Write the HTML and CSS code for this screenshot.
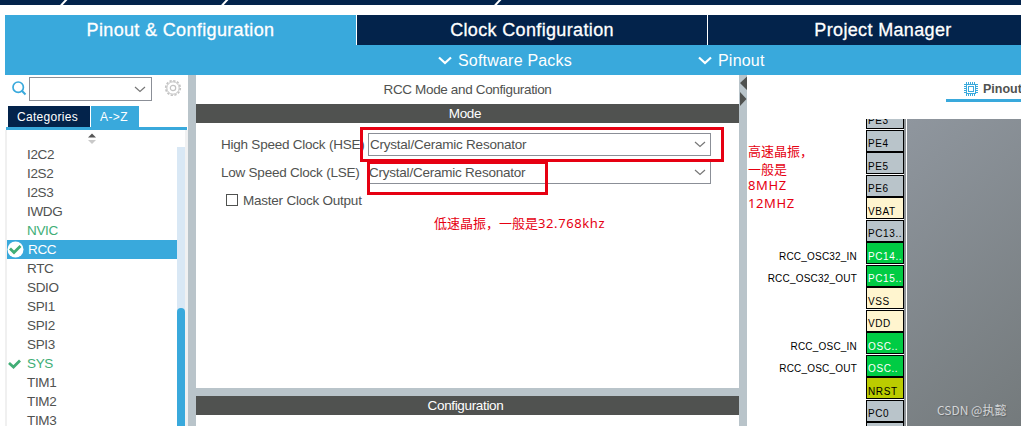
FILE: index.html
```html
<!DOCTYPE html>
<html lang="en">
<head>
    <meta charset="UTF-8">
    <meta name="viewport" content="width=device-width, initial-scale=1.0">
    <title>Pinout &amp; Configuration</title>
    <link rel="stylesheet" href="styles.css">
</head>
<body>
    <div class="breadcrumb">
        <svg width="1021" height="5" viewBox="0 0 1021 5" stroke="#fff" stroke-width="2">
            <path d="M61 5.5L67 -1M222 5.5L228 -1M495 5.5L501 -1"/>
        </svg>
    </div>

    <header class="header">
        <nav class="main-tabs">
            <div class="main-tab active"><span>Pinout &amp; Configuration</span></div>
            <div class="main-tab"><span>Clock Configuration</span></div>
            <div class="main-tab"><span>Project Manager</span></div>
        </nav>
        <div class="sub-menu">
            <div class="sub-item packs">
                <svg width="14" height="9" viewBox="0 0 14 9" fill="none" stroke="#fff" stroke-width="2.2"><path d="M1 1.5L7 7L13 1.5"/></svg>
                <span>Software Packs</span>
            </div>
            <div class="sub-item pinout">
                <svg width="14" height="9" viewBox="0 0 14 9" fill="none" stroke="#fff" stroke-width="2.2"><path d="M1 1.5L7 7L13 1.5"/></svg>
                <span>Pinout</span>
            </div>
        </div>
    </header>

    <main class="workspace">
        <aside class="sidebar">
            <div class="search-row">
                <svg class="search-icon" width="15" height="15" viewBox="0 0 15 15" fill="none" stroke="#39a9dc"><circle cx="6.2" cy="6.2" r="5.2" stroke-width="1.7"/><path d="M9.8 9.8L13.5 13.5" stroke-width="2"/></svg>
                <div class="search-box">
                    <svg class="arrow" width="12" height="7" viewBox="0 0 12 7"><path d="M1 1L6 5.5L11 1"/></svg>
                </div>
                <svg class="gear" width="18" height="18" viewBox="0 0 18 18" fill="none" stroke="#c3c3c3">
                    <circle cx="9" cy="9" r="7.3" stroke-width="1.6" stroke-dasharray="2.3 1.522"/>
                    <circle cx="9" cy="9" r="6.2"/>
                    <circle cx="9" cy="9" r="2.7" stroke-width="1.2"/>
                </svg>
            </div>
            <div class="side-tabs">
                <span class="side-tab categories">Categories</span>
                <span class="side-tab az">A-&gt;Z</span>
            </div>
            <div class="list">
                <div class="rows">
                    <svg class="sorter" width="8" height="12" viewBox="0 0 8 12"><path d="M0 4.5L4 0.5L8 4.5Z" fill="#555"/><path d="M0 7L4 11L8 7Z" fill="#c9c9c9"/></svg>
                    <div class="row">I2C2</div>
                    <div class="row">I2S2</div>
                    <div class="row">I2S3</div>
                    <div class="row">IWDG</div>
                    <div class="row green">NVIC</div>
                    <div class="row selected">
                        <svg class="check" width="17" height="17" viewBox="0 0 17 17"><circle cx="8.5" cy="8.5" r="8" fill="#fff"/><path d="M3 7.500L7 11.500L13.500 5" fill="none" stroke="#41ae76" stroke-width="2.8"/></svg>
                        RCC
                    </div>
                    <div class="row">RTC</div>
                    <div class="row">SDIO</div>
                    <div class="row">SPI1</div>
                    <div class="row">SPI2</div>
                    <div class="row">SPI3</div>
                    <div class="row green">
                        <svg class="check" width="15" height="17" viewBox="0 0 15 17"><path d="M2 8L6.500 12L13 5.500" fill="none" stroke="#41ae76" stroke-width="2.8"/></svg>
                        SYS
                    </div>
                    <div class="row">TIM1</div>
                    <div class="row">TIM2</div>
                    <div class="row">TIM3</div>
                </div>
                <div class="scrollbar"><div class="thumb"></div></div>
            </div>
        </aside>

        <div class="splitter"></div>

        <section class="mode-panel">
            <div class="panel-title"><span>RCC Mode and Configuration</span></div>
            <div class="bar"><span>Mode</span></div>
            <div class="form">
                <div class="field">
                    <label>High Speed Clock (HSE)</label>
                    <div class="select"><span>Crystal/Ceramic Resonator</span><svg class="arrow" width="12" height="7" viewBox="0 0 12 7"><path d="M1 1L6 5.5L11 1"/></svg></div>
                </div>
                <div class="field">
                    <label>Low Speed Clock (LSE)</label>
                    <div class="select lse"><span>Crystal/Ceramic Resonator</span><svg class="arrow" width="12" height="7" viewBox="0 0 12 7"><path d="M1 1L6 5.5L11 1"/></svg></div>
                </div>
                <div class="option"><i class="box"></i><span>Master Clock Output</span></div>
            </div>
            <div class="h-splitter"></div>
            <div class="bar config"><span>Configuration</span></div>
        </section>

        <div class="splitter">
            <svg width="8" height="32" viewBox="0 0 8 32" fill="#505250"><path d="M8 1.500V15L1 8ZM1 17V31L7.500 24Z"/></svg>
        </div>

        <section class="view">
            <div class="view-tabs">
                <div class="view-tab">
                    <svg width="14" height="14" viewBox="0 0 14 14" fill="none" stroke="#39a9dc">
                        <path d="M2.500 0V14M4.500 0V14M6.500 0V14M8.500 0V14M10.500 0V14M0 2.500H14M0 4.500H14M0 6.500H14M0 8.500H14M0 10.500H14"/>
                        <rect x="2.500" y="2.500" width="9" height="9" fill="#fff"/>
                        <rect x="4.500" y="4.500" width="5" height="5"/>
                    </svg>
                    <span>Pinout</span>
                </div>
            </div>
            <div class="canvas">
                <div class="pins">
                    <div class="pin-row cut"><span class="pin">PE3</span></div>
                    <div class="pin-row"><span class="pin">PE4</span></div>
                    <div class="pin-row end"><span class="pin">PE5</span></div>
                    <div class="pin-row"><span class="pin">PE6</span></div>
                    <div class="pin-row end"><span class="pin power">VBAT</span></div>
                    <div class="pin-row"><span class="pin">PC13..</span></div>
                    <div class="pin-row end"><span class="signal">RCC_OSC32_IN</span><span class="pin used">PC14..</span></div>
                    <div class="pin-row"><span class="signal">RCC_OSC32_OUT</span><span class="pin used">PC15..</span></div>
                    <div class="pin-row end"><span class="pin power">VSS</span></div>
                    <div class="pin-row"><span class="pin power">VDD</span></div>
                    <div class="pin-row end"><span class="signal">RCC_OSC_IN</span><span class="pin used">OSC..</span></div>
                    <div class="pin-row"><span class="signal">RCC_OSC_OUT</span><span class="pin used">OSC..</span></div>
                    <div class="pin-row end"><span class="pin reset">NRST</span></div>
                    <div class="pin-row"><span class="pin">PC0</span></div>
                    <div class="pin-row"><span class="pin"></span></div>
                </div>
                <div class="chip"></div>
            </div>
        </section>
    </main>

    <!-- notes drawn over the window -->
    <div class="mark mark-hse"></div>
    <div class="mark mark-lse"></div>
    <div class="note note-lse" lang="zh">低速晶振，一般是<span class="latin">32.768khz</span></div>
    <div class="note note-hse" lang="zh">
        <div>高速晶振，</div>
        <div>一般是</div>
        <div class="latin">8MHZ</div>
        <div class="latin">12MHZ</div>
    </div>
    <div class="watermark" lang="zh">CSDN @执懿</div>
</body>
</html>
```
FILE: styles.css
```css
* {
    box-sizing: border-box;
}

body {
    margin: 0;
    width: 1021px;
    height: 426px;
    overflow: hidden;
    position: relative;
    background: #fff;
    font-family: "Liberation Sans", Arial, sans-serif;
    font-size: 13.5px;
    letter-spacing: -0.23px;
    color: #505250;
    white-space: nowrap;
}

svg {
    display: block;
    flex-shrink: 0;
}

/* header */
.breadcrumb {
    height: 5px;
    background: #03234b;
}

.header {
    margin: 10px 0 0 5px;
    overflow: hidden;
    background: #39a9dc;
    color: #fff;
}

.main-tabs {
    display: flex;
}

.main-tab {
    flex: 0 0 351px;
    height: 30px;
    line-height: 31px;
    text-align: center;
    font-size: 18px;
    background: #03234b;
    border-right: 1px solid #fff;
    -webkit-text-stroke: 0.3px #fff;
    letter-spacing: 0.35px;
}

.main-tab.active {
    flex-basis: 352px;
    background: #39a9dc;
}

.sub-menu {
    display: flex;
    height: 30px;
    padding: 1px 0 0 433px;
    font-size: 16px;
}

.sub-item {
    display: flex;
    align-items: center;
    gap: 6px;
    letter-spacing: 0.2px;
}

.packs {
    width: 260px;
}

/* body */
.workspace {
    display: flex;
    height: 351px;
}

.splitter {
    flex-shrink: 0;
    width: 8px;
    background: #b9c4ca;
}

.sidebar {
    width: 183px;
    margin-left: 5px;
    display: flex;
    flex-direction: column;
}

.search-row {
    display: flex;
    height: 31px;
    padding: 2px 0 0 7px;
}

.search-icon {
    margin-top: 4px;
}

.search-box {
    width: 123px;
    height: 24px;
    margin-left: 2px;
    border: 1px solid #8b8f97;
    display: flex;
    align-items: center;
    justify-content: flex-end;
    padding-right: 5px;
}

.arrow {
    fill: none;
    stroke: #777;
    stroke-width: 1.2;
}

.gear {
    margin: 2px 0 0 12px;
}

.side-tabs {
    display: flex;
    gap: 1px;
    margin: 0 1px;
    padding-left: 2px;
    border-bottom: 3px solid #39a9dc;
    color: #fff;
    font-size: 12px;
    line-height: 22px;
}

.side-tab {
    height: 21px;
    padding-left: 9px;
    background: #39a9dc;
}

.categories {
    width: 82px;
    background: #03234b;
    letter-spacing: 0.3px;
}

.az {
    width: 48px;
    letter-spacing: 0.4px;
}

.list {
    flex: 1;
    display: flex;
    min-height: 0;
    overflow: hidden;
    border-left: 2px solid #f0f0f0;
    border-right: 3px solid #f0f1f2;
}

.rows {
    width: 170px;
}

.sorter {
    margin: 3px 0 0 81px;
}

.row {
    display: flex;
    height: 19px;
    line-height: 19px;
    padding-left: 20px;
    letter-spacing: -0.35px;
}

.green {
    color: #41ae76;
}

.selected {
    background: #39a9dc;
    color: #fff;
}

.check {
    margin: 1px 4px 0 -20px;
}

.green .check {
    margin: 1px 5px 0 -20px;
}

.scrollbar {
    width: 8px;
    margin-top: 17px;
    padding-top: 161px;
    background: #d9e8f5;
}

.thumb {
    height: 130px;
    border-radius: 4px;
    background: #39a9dc;
}

/* mode panel */
.mode-panel {
    flex-shrink: 0;
    width: 543px;
    display: flex;
    flex-direction: column;
    text-align: center;
}

.panel-title {
    height: 29px;
    line-height: 29px;
    letter-spacing: -0.35px;
}

.bar {
    height: 19px;
    line-height: 19px;
    background: #505250;
    color: #fff;
    padding-right: 5px;
    letter-spacing: -0.35px;
}

.form {
    height: 265px;
    padding: 10px 28px 0 25px;
    text-align: left;
}

.field {
    display: flex;
    height: 23px;
    line-height: 23px;
    margin-bottom: 5px;
}

.field label {
    width: 147px;
}

.select {
    flex: 1;
    display: flex;
    align-items: center;
    justify-content: space-between;
    padding: 0 4px 0 1px;
    border: 1px solid #8b8f97;
}

.lse {
    padding-left: 0;
}

.option {
    display: flex;
    align-items: center;
    gap: 5px;
    margin-top: 10px;
    padding-left: 5px;
    height: 12px;
}

.box {
    width: 12px;
    height: 12px;
    border: 1px solid #505250;
}

.h-splitter {
    height: 8px;
    background: #b9c4ca;
}

.config {
    padding-right: 4px;
}

/* pinout view */
.view {
    width: 274px;
    overflow: hidden;
}

.view-tabs {
    height: 44px;
    padding-left: 199px;
}

.view-tab {
    display: flex;
    align-items: center;
    gap: 5px;
    width: 120px;
    height: 27px;
    padding: 3px 0 0 18px;
    border-bottom: 3px solid #39a9dc;
    font-size: 12.5px;
    font-weight: bold;
    letter-spacing: 0;
}

.canvas {
    display: flex;
    height: 307px;
    overflow: hidden;
}

.pins {
    flex-shrink: 0;
    width: 157px;
    font-size: 10px;
    letter-spacing: 0.6px;
    color: #000;
}

.pin-row {
    display: flex;
    justify-content: flex-end;
    height: 22px;
    line-height: 26px;
}

.pin-row.end {
    line-height: 28px;
}

.pin-row.end,
.pin-row.cut {
    margin-bottom: 1px;
}

.pin-row.cut {
    margin-top: -12px;
}

.signal {
    margin-right: 9px;
    line-height: 27px;
    letter-spacing: 0.2px;
}

.end .signal {
    line-height: 29px;
}

.pin {
    width: 38px;
    border: 1px solid #000;
    padding-left: 1px;
    background: #b9c4ca;
}

.power {
    background: #fff5cf;
}

.used {
    background: #00cc44;
    color: #fff;
}

.reset {
    background: #bbcc00;
}

.chip {
    flex: 1;
    margin-left: 2px;
    border-left: 1px solid #fff;
    background: linear-gradient(140deg, #8f969e, #747a7c);
    box-shadow: -2px 0 #8f9498;
}

/* notes */
.mark {
    position: absolute;
    border: 3px solid #e60012;
}

.mark-hse {
    left: 360px;
    top: 127px;
    width: 364px;
    height: 35px;
}

.mark-lse {
    left: 367px;
    top: 161px;
    width: 181px;
    height: 34px;
}

.note {
    position: absolute;
    font-family: "Noto Sans CJK SC", sans-serif;
    font-size: 13px;
    letter-spacing: 0;
    color: #e60012;
}

.latin {
    font-family: "Noto Sans", sans-serif;
    letter-spacing: 0.6px;
}

.note-lse {
    left: 434px;
    top: 214px;
    line-height: 18px;
}

.note-hse {
    left: 748px;
    top: 142px;
    line-height: 17.5px;
}

.watermark {
    position: absolute;
    left: 937px;
    top: 401px;
    line-height: 18px;
    font-family: "Noto Sans CJK SC", sans-serif;
    font-size: 12px;
    letter-spacing: 0;
    color: #d2d4d6;
    text-shadow: 1px 1px 1px #5c6062;
}
```
